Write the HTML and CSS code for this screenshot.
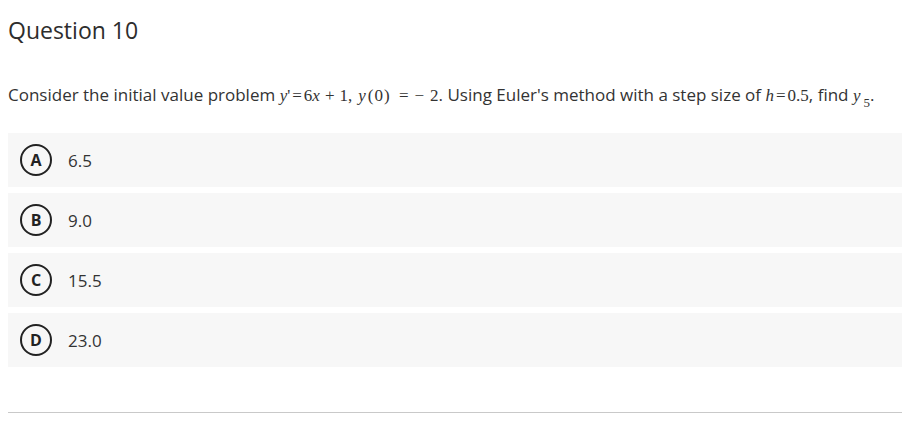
FILE: index.html
```html
<!DOCTYPE html>
<html>
<head>
<meta charset="utf-8">
<link rel="stylesheet" href="styles.css">
</head>
<body>
<div class="question">
  <h1 class="q-title">Question 10</h1>
  <p class="q-text">Consider the initial value problem <span class="math"><i>y</i>'<span class="op">=</span>6<i>x</i><span class="op2">+</span>1<span class="comma">,</span><i>y</i><span class="paren">(</span><span class="num">0</span>) <span class="op2">=</span><span class="op3">−</span>2</span>. Using Euler's method with a step size of <span class="math"><i>h</i><span class="op">=</span>0.5</span>, find <span class="math"><i>y</i><sub class="sub">5</sub></span>.</p>
  <ul class="options">
    <li class="option"><span class="badge">A</span><span class="opt-text">6.5</span></li>
    <li class="option"><span class="badge">B</span><span class="opt-text">9.0</span></li>
    <li class="option"><span class="badge">C</span><span class="opt-text">15.5</span></li>
    <li class="option"><span class="badge">D</span><span class="opt-text">23.0</span></li>
  </ul>
  <hr class="sep">
</div>
</body>
</html>
```
FILE: styles.css
```css
html, body {
  background: #ffffff;
}
body {
  margin: 0;
  padding: 8px 0 0 8px;
  font-family: "Open Sans", "Liberation Sans", sans-serif;
  color: #333333;
}
.q-title {
  margin: 8px 0 0 0;
  font-size: 23px;
  font-weight: 400;
  line-height: 28px;
  color: #2d2d2d;
}
.q-text {
  margin: 39px 0 0 0;
  font-size: 17px;
  line-height: 24px;
  color: #333333;
}
.math {
  font-family: "Liberation Serif", "Times New Roman", serif;
  font-size: 17px;
}
.op { margin: 0 2px; }
.op2 { margin: 0 5px; }
.op3 { margin: 0 6px 0 1px; }
.comma { margin-right: 6px; }
.paren { margin-left: 2px; }
.num { margin: 0 1px; }
.sub {
  font-size: 13px;
  vertical-align: -6px;
  margin-left: 3px;
}
.options {
  list-style: none;
  margin: 18px 0 0 0;
  padding: 0;
  display: flex;
  flex-direction: column;
  gap: 6px;
}
.option {
  height: 54px;
  background: #f7f7f7;
  display: flex;
  align-items: center;
  padding-left: 12px;
}
.badge {
  box-sizing: border-box;
  width: 32px;
  height: 32px;
  border: 2px solid #222;
  border-radius: 50%;
  display: flex;
  align-items: center;
  justify-content: center;
  font-size: 16px;
  font-weight: 700;
  color: #222;
}
.opt-text {
  margin-left: 16px;
  font-size: 17px;
  color: #333;
}
.sep {
  margin: 45px 0 0 0;
  border: 0;
  border-top: 1px solid #c9c9c9;
  height: 0;
}
```
